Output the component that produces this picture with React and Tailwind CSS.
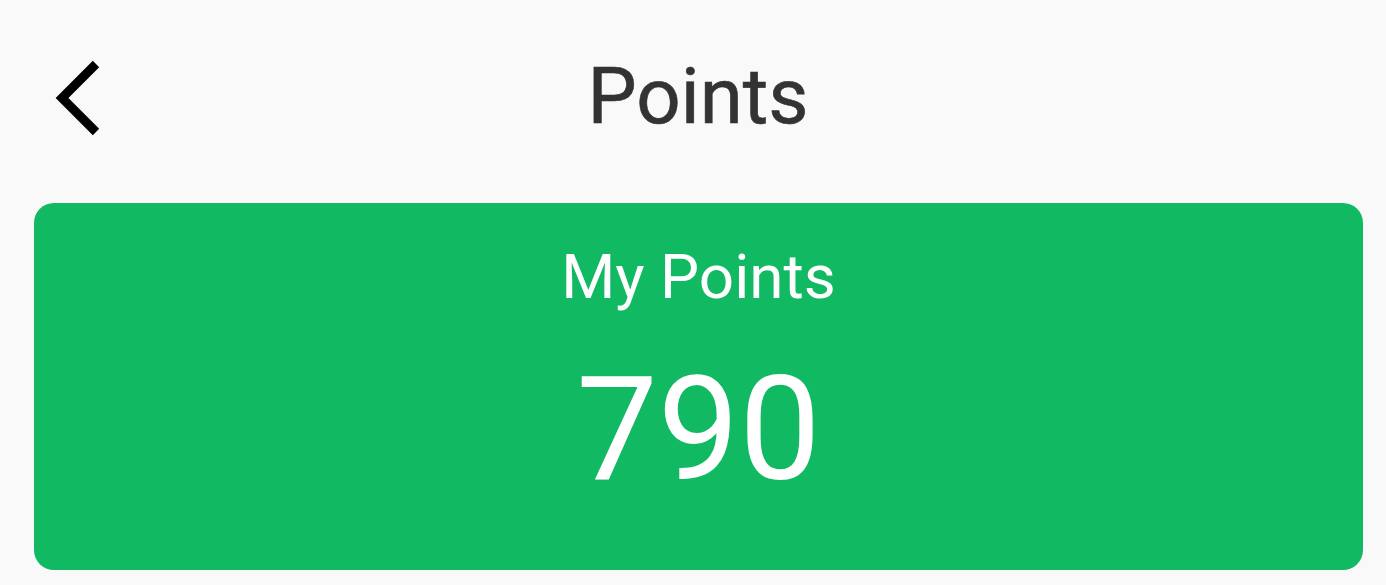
import React from "react";

const BackIcon = () => (
  <svg width="70" height="100" viewBox="0 0 70 100" fill="none">
    <polyline
      points="56,14 22,48 56,82"
      stroke="#000"
      strokeWidth="9"
      strokeLinecap="butt"
      strokeLinejoin="miter"
    />
  </svg>
);

const App = () => {
  const points = 790;

  return (
    <div
      className="min-h-screen w-full bg-[#f9f9f9]"
      style={{ fontFamily: "Roboto, 'Noto Sans', sans-serif" }}
    >
      <header className="relative flex h-[194px] items-center justify-center pl-[10px]">
        <button className="absolute left-[40px] top-[50px]">
          <BackIcon />
        </button>
        <h1 className="text-[78px] leading-none font-normal text-[#333333] [-webkit-text-stroke:0.6px_#333333]">
          Points
        </h1>
      </header>

      <div className="ml-[34px] mr-[23px] mt-[9px] h-[367px] rounded-[20px] bg-[#10b962] pt-[43px] text-center text-white">
        <div className="text-[62px] leading-none">My Points</div>
        <div className="mt-[49px] text-[145px] leading-none">{points}</div>
      </div>
    </div>
  );
};

export default App;
